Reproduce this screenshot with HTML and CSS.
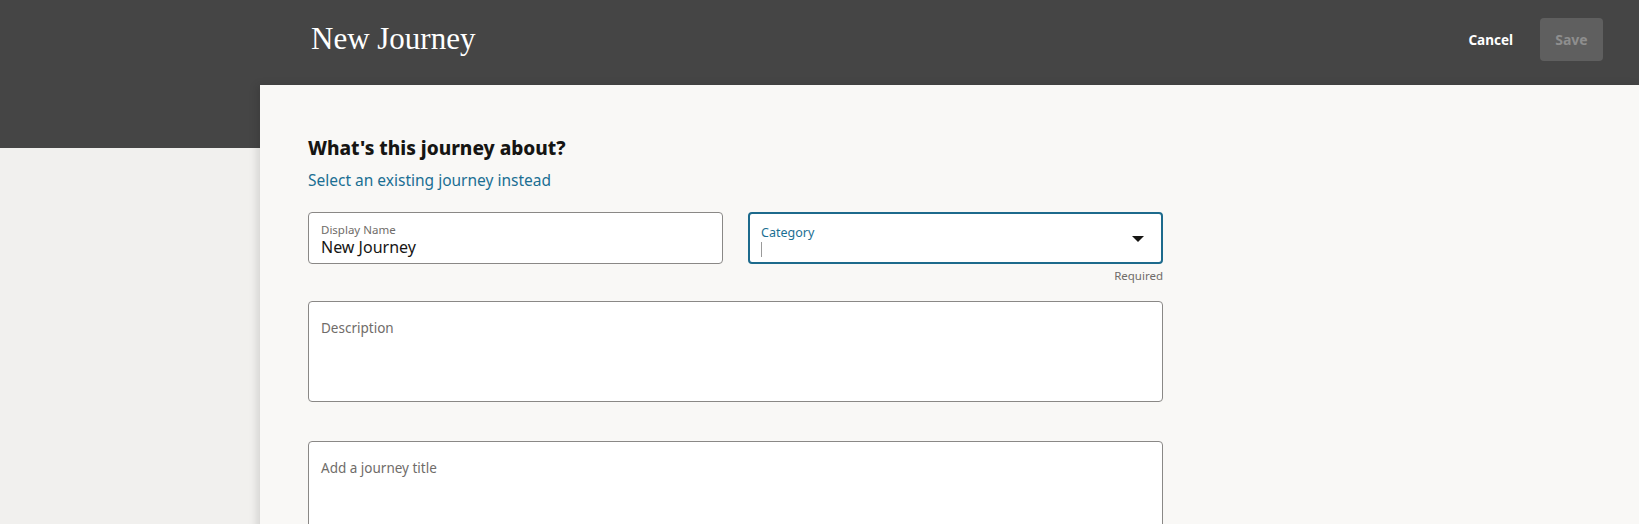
FILE: index.html
```html
<!DOCTYPE html>
<html lang="en">
<head>
<meta charset="utf-8">
<title>New Journey</title>
<link rel="stylesheet" href="styles.css">
</head>
<body>
<header class="topbar">
  <h1 class="page-title">New Journey</h1>
  <div class="actions">
    <button class="btn-cancel" type="button">Cancel</button>
    <button class="btn-save" type="button" disabled>Save</button>
  </div>
</header>
<main class="panel">
  <h2 class="section-title">What's this journey about?</h2>
  <a class="link" href="#">Select an existing journey instead</a>
  <div class="row">
    <div class="field">
      <div class="box">
        <span class="label">Display Name</span>
        <span class="value">New Journey</span>
      </div>
    </div>
    <div class="field">
      <div class="box box-focus">
        <span class="label label-focus">Category</span>
        <span class="caret"></span>
        <svg class="arrow" width="12" height="6" viewBox="0 0 12 6"><path d="M0 0h12L6 6z" fill="#161513"/></svg>
      </div>
      <div class="helper">Required</div>
    </div>
  </div>
  <div class="area area-desc">
    <span class="placeholder">Description</span>
  </div>
  <div class="area area-title">
    <span class="placeholder">Add a journey title</span>
  </div>
</main>
</body>
</html>
```
FILE: styles.css
```css
html, body {
  margin: 0;
  padding: 0;
}
body {
  font-family: "Noto Sans", "Liberation Sans", sans-serif;
  background: linear-gradient(#454545 0, #454545 148px, #f1f0ee 148px);
  min-height: 524px;
  overflow: hidden;
}
.topbar {
  height: 85px;
  display: flex;
  align-items: center;
  justify-content: space-between;
  padding: 0 36px 0 311px;
  box-sizing: border-box;
}
.page-title {
  margin: 0;
  font-family: "Liberation Serif", serif;
  font-weight: normal;
  font-size: 31px;
  color: #ffffff;
  position: relative;
  top: -4px;
}
.actions {
  display: flex;
  align-items: center;
  gap: 27px;
  position: relative;
  top: -2px;
}
.btn-cancel {
  background: none;
  border: none;
  color: #ffffff;
  font-family: "Noto Sans", sans-serif;
  font-weight: 700;
  font-size: 13.5px;
  padding: 0;
  position: relative;
  top: -1px;
}
.btn-save {
  width: 63px;
  height: 43px;
  border: none;
  border-radius: 4px;
  background: #5f5f5f;
  color: #8e8e8e;
  font-family: "Noto Sans", sans-serif;
  font-weight: 700;
  font-size: 14px;
  position: relative;
  top: -1px;
}
.panel {
  display: block;
  margin-left: 260px;
  background: #f9f8f6;
  min-height: 439px;
  box-shadow: -3px 0 8px rgba(0,0,0,0.12);
  padding: 50px 48px 0 48px;
  box-sizing: border-box;
}
.section-title {
  margin: 0;
  font-size: 19px;
  font-weight: 800;
  color: #161513;
  line-height: 26px;
}
.link {
  display: block;
  margin-top: 9px;
  color: #1b6f93;
  text-decoration: none;
  font-size: 15.5px;
  line-height: 20px;
}
.row {
  display: flex;
  gap: 25px;
  width: 855px;
  margin-top: 22px;
}
.field {
  flex: 1;
}
.box {
  position: relative;
  height: 52px;
  box-sizing: border-box;
  border: 1px solid #8a8886;
  border-radius: 4px;
  background: #ffffff;
  padding: 10px 12px 0 12px;
  display: flex;
  flex-direction: column;
}
.box-focus {
  border: 2px solid #1d6a8c;
  padding: 11px 11px 0 11px;
}
.label {
  font-size: 11.5px;
  color: #6f6c69;
  line-height: 14px;
}
.label-focus {
  color: #1b6f93;
  font-size: 12.5px;
  line-height: 15px;
}
.value {
  font-size: 16px;
  color: #161513;
  line-height: 20px;
}
.caret {
  display: block;
  width: 1px;
  height: 15px;
  background: #9a9a9a;
  margin-top: 2px;
}
.arrow {
  position: absolute;
  right: 17px;
  top: 22px;
}
.helper {
  text-align: right;
  font-size: 11.5px;
  color: #6f6c69;
  margin-top: 5px;
  line-height: 14px;
}
.area {
  width: 855px;
  box-sizing: border-box;
  border: 1px solid #8a8886;
  border-radius: 4px;
  background: #ffffff;
  padding: 14px 12px 0 12px;
}
.area-desc {
  height: 101px;
  margin-top: 18px;
}
.area-title {
  height: 100px;
  margin-top: 39px;
}
.placeholder {
  font-size: 13.5px;
  color: #6f6c69;
  line-height: 18px;
}
```
